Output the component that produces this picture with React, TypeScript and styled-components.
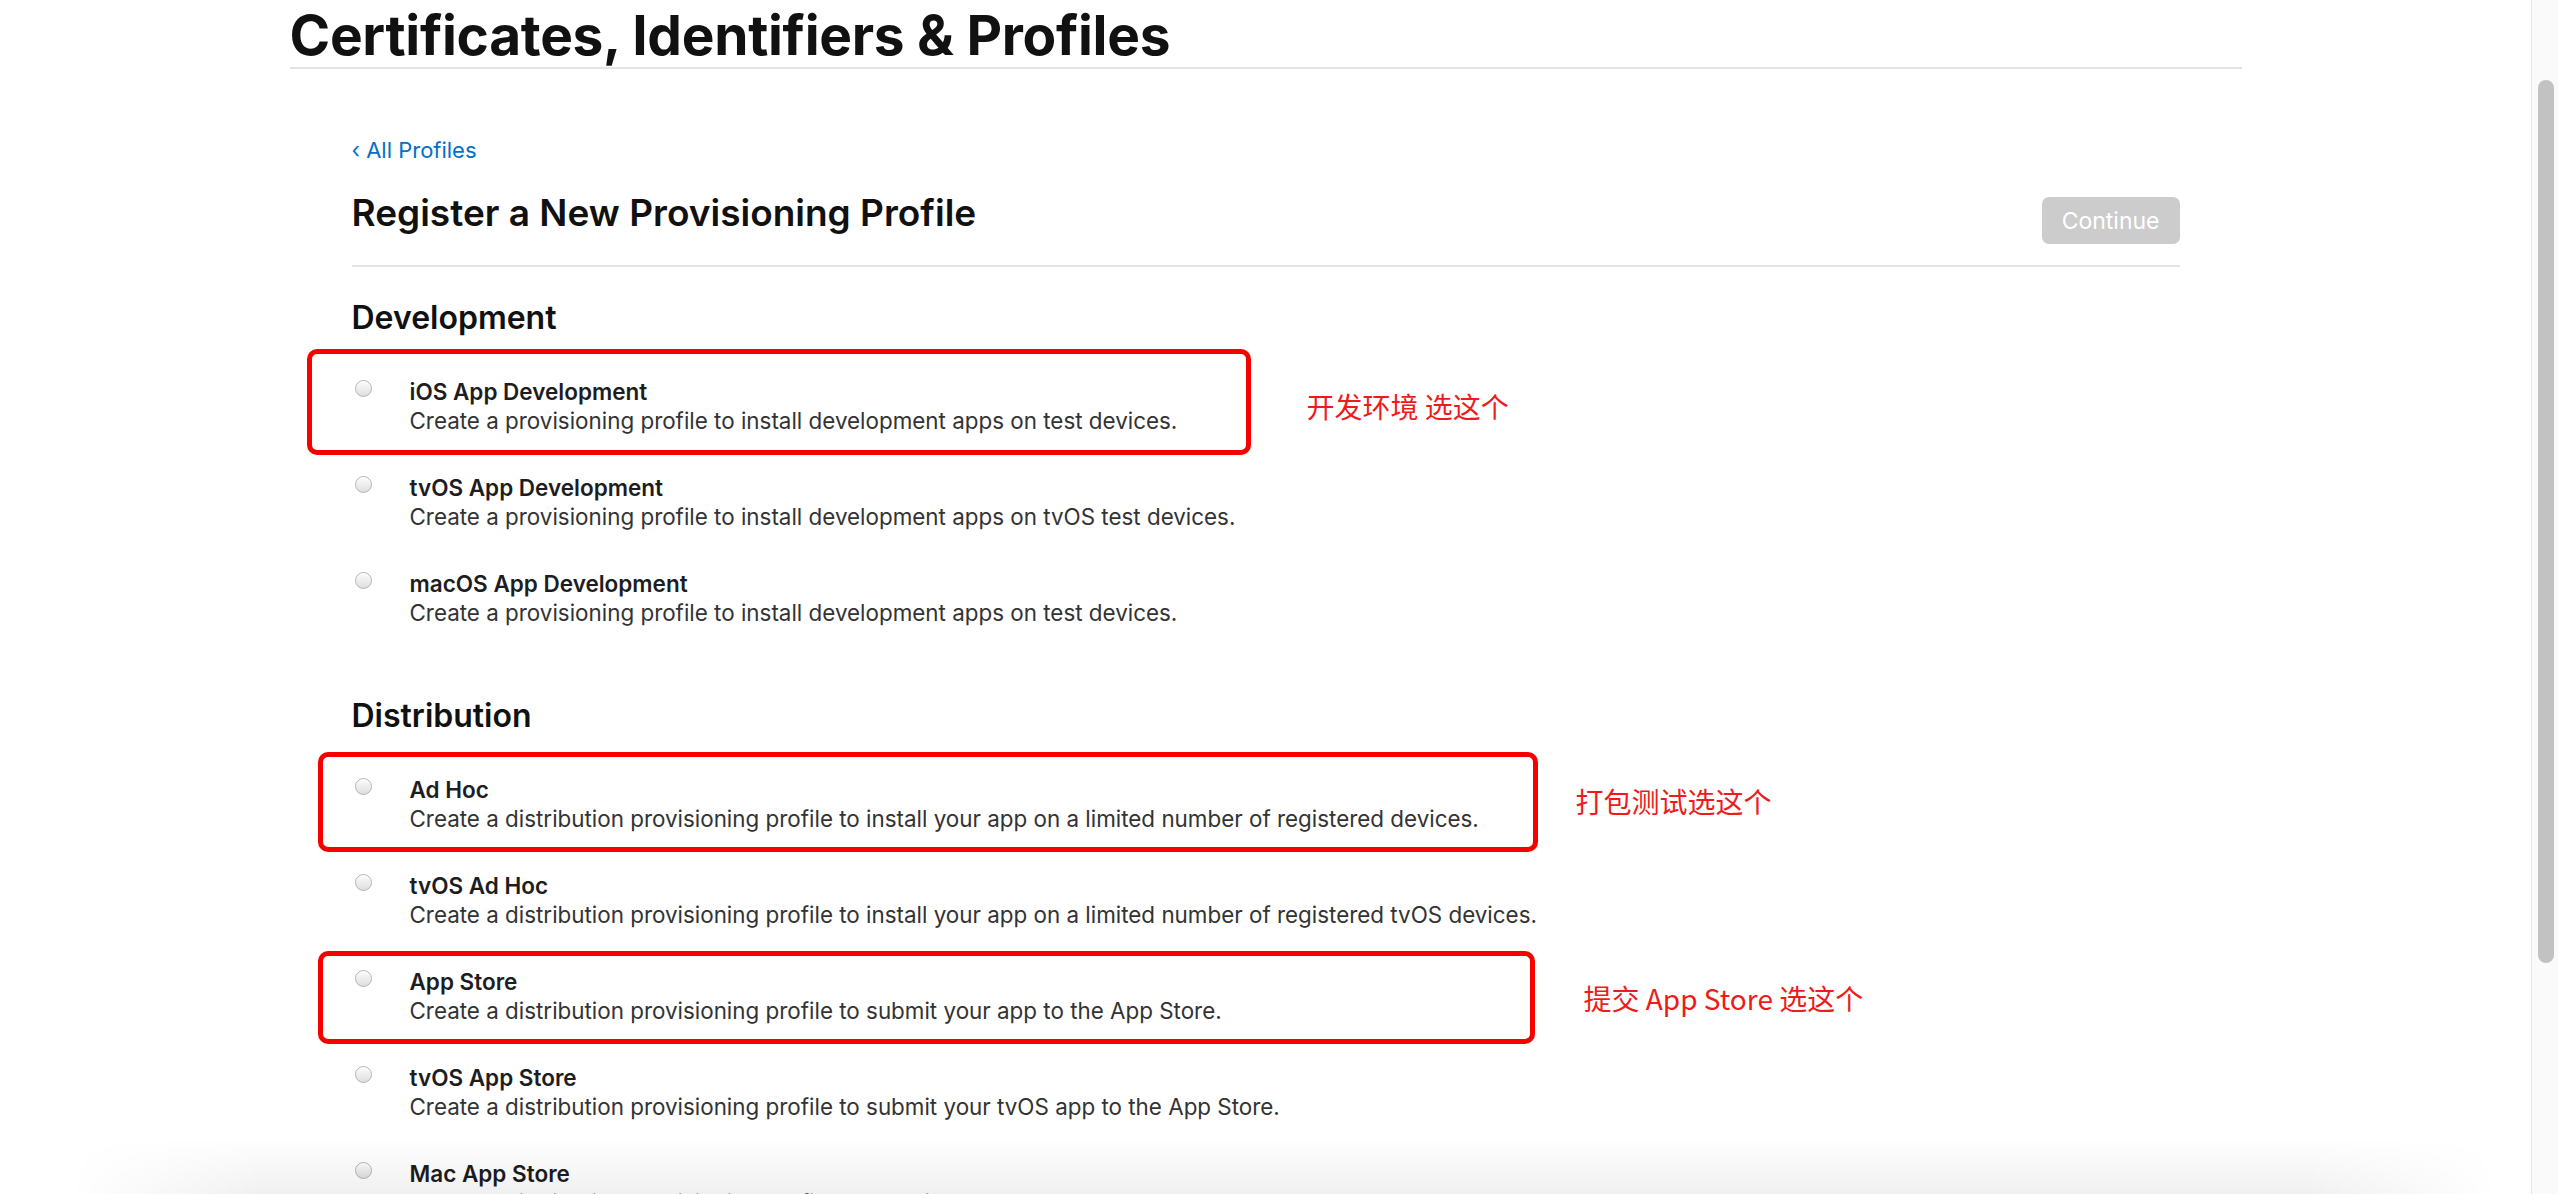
import styled, { createGlobalStyle } from 'styled-components';

interface Note {
  text: string;
  box: { left: number; top: number; width: number; height: number };
  at: { left: number; top: number };
}

interface Profile {
  id: string;
  name: string;
  description: string;
  note?: Note;
}

interface Group {
  id: string;
  title: string;
  profiles: Profile[];
}

const groups: Group[] = [
  {
    id: 'development',
    title: 'Development',
    profiles: [
      {
        id: 'ios-dev',
        name: 'iOS App Development',
        description:
          'Create a provisioning profile to install development apps on test devices.',
        note: {
          text: '开发环境 选这个',
          box: { left: -45, top: -28, width: 944, height: 106 },
          at: { left: 955, top: 12 },
        },
      },
      {
        id: 'tvos-dev',
        name: 'tvOS App Development',
        description:
          'Create a provisioning profile to install development apps on tvOS test devices.',
      },
      {
        id: 'macos-dev',
        name: 'macOS App Development',
        description:
          'Create a provisioning profile to install development apps on test devices.',
      },
    ],
  },
  {
    id: 'distribution',
    title: 'Distribution',
    profiles: [
      {
        id: 'adhoc',
        name: 'Ad Hoc',
        description:
          'Create a distribution provisioning profile to install your app on a limited number of registered devices.',
        note: {
          text: '打包测试选这个',
          box: { left: -34, top: -23, width: 1220, height: 100 },
          at: { left: 1224, top: 9 },
        },
      },
      {
        id: 'tvos-adhoc',
        name: 'tvOS Ad Hoc',
        description:
          'Create a distribution provisioning profile to install your app on a limited number of registered tvOS devices.',
      },
      {
        id: 'appstore',
        name: 'App Store',
        description:
          'Create a distribution provisioning profile to submit your app to the App Store.',
        note: {
          text: '提交 App Store 选这个',
          box: { left: -34, top: -16, width: 1217, height: 93 },
          at: { left: 1232, top: 14 },
        },
      },
      {
        id: 'tvos-appstore',
        name: 'tvOS App Store',
        description:
          'Create a distribution provisioning profile to submit your tvOS app to the App Store.',
      },
      {
        id: 'mac-appstore',
        name: 'Mac App Store',
        description:
          'Create a distribution provisioning profile to submit your app to the Mac App Store.',
      },
    ],
  },
];

const App = () => {
  return (
    <Page>
      <GlobalStyle />
      <Main>
        <Wrapper>
          <PageTitle>Certificates, Identifiers &amp; Profiles</PageTitle>
          <Content>
            <BackLink href="#">‹ All Profiles</BackLink>
            <HeaderRow>
              <Heading>Register a New Provisioning Profile</Heading>
              <ContinueButton disabled>Continue</ContinueButton>
            </HeaderRow>
            {groups.map((group) => (
              <Section key={group.id}>
                <SectionTitle>{group.title}</SectionTitle>
                <List>
                  {group.profiles.map((p) => (
                    <Row key={p.id}>
                      <Radio />
                      <Texts>
                        <Name>{p.name}</Name>
                        <Description>{p.description}</Description>
                      </Texts>
                      {p.note && (
                        <>
                          <MarkBox
                            $left={p.note.box.left}
                            $top={p.note.box.top}
                            $width={p.note.box.width}
                            $height={p.note.box.height}
                          />
                          <NoteText $left={p.note.at.left} $top={p.note.at.top}>
                            {p.note.text}
                          </NoteText>
                        </>
                      )}
                    </Row>
                  ))}
                </List>
              </Section>
            ))}
          </Content>
        </Wrapper>
      </Main>
      <Track>
        <Thumb />
      </Track>
      <BottomShade />
    </Page>
  );
};

export default App;

const GlobalStyle = createGlobalStyle`
  html, body {
    margin: 0;
    padding: 0;
    background: #fff;
    overflow: hidden;
  }

  body {
    font-family: Inter, "Noto Sans", "Liberation Sans", sans-serif;
    -webkit-font-smoothing: antialiased;
  }
`;

const Page = styled.div`
  position: relative;
  display: flex;
  height: 100vh;
  overflow: hidden;
`;

const Main = styled.div`
  flex: 1;
  overflow: hidden;
`;

const Wrapper = styled.div`
  width: 1952px;
  margin: 0 auto;
`;

const PageTitle = styled.h1`
  margin: 3px 0 0;
  font-size: 55px;
  line-height: 64px;
  font-weight: 700;
  letter-spacing: -0.3px;
  color: #111;
  border-bottom: 2px solid #e4e4e4;
`;

const Content = styled.div`
  padding: 0 62px;
`;

const BackLink = styled.a`
  display: block;
  margin-top: 67px;
  font-size: 22px;
  line-height: 29px;
  color: #0070c9;
  text-decoration: none;
`;

const HeaderRow = styled.div`
  display: flex;
  justify-content: space-between;
  align-items: flex-start;
  margin-top: 26px;
  padding-bottom: 21px;
  border-bottom: 2px solid #e4e4e4;
`;

const Heading = styled.h2`
  margin: 0;
  font-size: 37px;
  line-height: 44px;
  font-weight: 600;
  color: #111;
`;

const ContinueButton = styled.button`
  margin-top: 6px;
  height: 47px;
  padding: 0 20px;
  border: none;
  border-radius: 7px;
  background: #cccccc;
  color: #fff;
  font-family: inherit;
  font-size: 23px;
`;

const Section = styled.section`
  margin-top: 32px;

  & + & {
    margin-top: 70px;
  }
`;

const SectionTitle = styled.h3`
  margin: 0 0 40px;
  font-size: 32px;
  line-height: 38px;
  font-weight: 600;
  color: #111;
`;

const List = styled.div`
  display: flex;
  flex-direction: column;
  gap: 38px;
`;

const Row = styled.div`
  position: relative;
  display: flex;
  align-items: flex-start;
`;

const Radio = styled.span`
  flex: none;
  box-sizing: border-box;
  width: 17px;
  height: 17px;
  margin: 3px 38px 0 3px;
  border-radius: 50%;
  border: 1px solid #b4b4b4;
  background: linear-gradient(#fdfdfd, #dedede);
  box-shadow: inset 0 1px 1px rgba(255, 255, 255, 0.8);
`;

const Texts = styled.div`
  display: flex;
  flex-direction: column;
`;

const Name = styled.div`
  font-size: 22.5px;
  line-height: 29px;
  font-weight: 600;
  color: #1d1d1f;
`;

const Description = styled.div`
  font-size: 22.4px;
  line-height: 29px;
  color: #333;
`;

interface BoxProps {
  $left: number;
  $top: number;
  $width: number;
  $height: number;
}

const MarkBox = styled.div<BoxProps>`
  position: absolute;
  left: ${(p) => p.$left}px;
  top: ${(p) => p.$top}px;
  width: ${(p) => p.$width}px;
  height: ${(p) => p.$height}px;
  box-sizing: border-box;
  border: 5px solid #f70000;
  border-radius: 10px;
  pointer-events: none;
`;

const NoteText = styled.div<{ $left: number; $top: number }>`
  position: absolute;
  left: ${(p) => p.$left}px;
  top: ${(p) => p.$top}px;
  white-space: nowrap;
  font-family: "Noto Sans CJK SC", "Noto Sans", sans-serif;
  font-size: 28px;
  line-height: 34px;
  color: #ee1b1b;
`;

const Track = styled.div`
  flex: none;
  box-sizing: border-box;
  width: 27px;
  padding: 80px 0 0 6px;
  border-left: 1px solid #e6e6e6;
  background: #fafafa;
`;

const Thumb = styled.div`
  width: 16px;
  height: 883px;
  border-radius: 8px;
  background: #c2c2c2;
`;

const BottomShade = styled.div`
  position: absolute;
  left: 70px;
  right: 60px;
  bottom: 0;
  height: 56px;
  background: linear-gradient(to bottom, rgba(0, 0, 0, 0), rgba(0, 0, 0, 0.06));
  -webkit-mask-image: linear-gradient(to right, transparent, #000 8%, #000 92%, transparent);
  mask-image: linear-gradient(to right, transparent, #000 8%, #000 92%, transparent);
  pointer-events: none;
`;
